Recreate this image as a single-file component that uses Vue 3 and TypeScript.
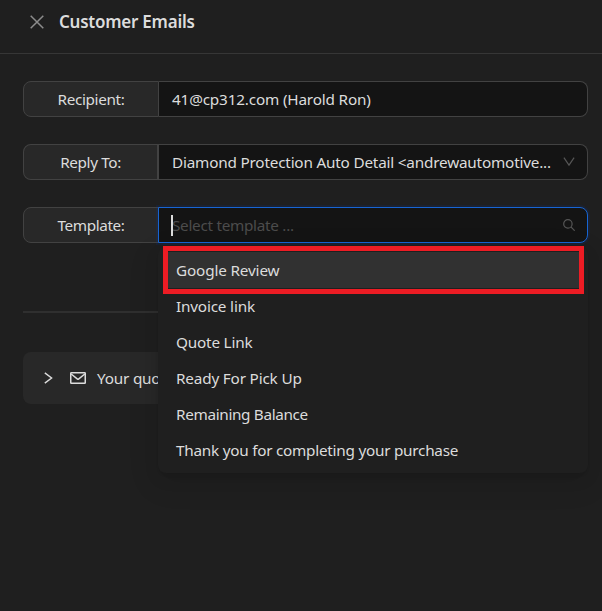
<script setup lang="ts">
import { ref } from 'vue'

interface Template {
  label: string
  fit: string
}

const templates: Template[] = [
  { label: 'Google Review', fit: 'fit-a' },
  { label: 'Invoice link', fit: 'fit-b' },
  { label: 'Quote Link', fit: 'fit-c' },
  { label: 'Ready For Pick Up', fit: 'fit-d' },
  { label: 'Remaining Balance', fit: 'fit-e' },
  { label: 'Thank you for completing your purchase', fit: 'fit-f' },
]
const active = ref<number>(0)
</script>

<template>
  <div class="drawer">
    <header class="header">
      <svg class="close" viewBox="0 0 14 14"><path d="M.7.7 13.3 13.3M13.3.7.7 13.3" /></svg>
      <h1><span class="t-title">Customer Emails</span></h1>
    </header>

    <main class="body">
      <div class="field">
        <div class="addon"><span class="t-recipient">Recipient:</span></div>
        <div class="control"><span class="t-email">41@cp312.com (Harold Ron)</span></div>
      </div>

      <div class="field">
        <div class="addon double"><span class="t-reply">Reply To:</span></div>
        <div class="control">
          <span class="t-sender">Diamond Protection Auto Detail &lt;andrewautomotive...</span>
          <svg class="suffix" viewBox="0 0 12 12"><path d="M.9 1.6 6 9.2l5.1-7.6" /></svg>
        </div>
      </div>

      <div class="field">
        <div class="addon"><span class="t-template">Template:</span></div>
        <div class="control focused">
          <i class="caret"></i>
          <span class="placeholder t-select">Select template ...</span>
          <svg class="suffix" viewBox="0 0 12 12"><circle cx="4.9" cy="4.9" r="4.2" /><path d="m7.9 7.9 3.8 3.8" /></svg>
        </div>
        <ul class="dropdown">
          <li
            v-for="(item, i) in templates"
            :key="item.label"
            :class="{ active: i === active }"
            @mouseenter="active = i"
          ><span :class="item.fit">{{ item.label }}</span></li>
        </ul>
        <div class="marker"></div>
      </div>

      <hr class="divider" />

      <section class="panel">
        <svg class="chevron" viewBox="0 0 9 12"><path d="m.8.9 6.8 5.1-6.8 5.1" /></svg>
        <svg class="mail" viewBox="0 0 16 12">
          <rect x=".75" y=".75" width="14.5" height="10.5" rx=".6" />
          <path d="m1.2 2 6.3 5.1q.5.4 1 0L14.8 2" />
        </svg>
        <span class="t-quote">Your quote</span>
      </section>
    </main>
  </div>
</template>

<style>
body {
  background: #1f1f1f;
}
</style>

<style scoped>
.drawer {
  box-sizing: border-box;
  width: 602px;
  height: 611px;
  overflow: hidden;
  background: #1f1f1f;
  color: #dcdcdc;
  font: 15.3px/24px "Noto Sans", "Open Sans", sans-serif;
  letter-spacing: -0.2px;
  white-space: nowrap;
}
.t-title { letter-spacing: -0.24px; }
.t-recipient { letter-spacing: -0.34px; }
.t-email { letter-spacing: -0.18px; }
.t-reply { letter-spacing: -0.37px; }
.t-sender { letter-spacing: -0.2px; }
.t-template { letter-spacing: -0.4px; }
.t-select { letter-spacing: -0.29px; }
.fit-a { letter-spacing: -0.16px; }
.fit-b { letter-spacing: -0.18px; }
.fit-d { letter-spacing: -0.18px; }
.fit-e { letter-spacing: -0.34px; }
.fit-f { letter-spacing: -0.25px; }
svg {
  display: block;
  flex: none;
  fill: none;
  stroke: currentColor;
}
.header {
  box-sizing: border-box;
  display: flex;
  align-items: center;
  height: 54px;
  padding: 0 30px 10px;
  border-bottom: 1px solid #363636;
}
.close {
  width: 14px;
  height: 14px;
  color: #8c8c8c;
  stroke-width: 1.5;
}
h1 {
  margin: 0 0 0 15px;
  font-size: 17px;
  line-height: 26px;
  font-weight: 600;
}
.body {
  padding: 27px 14px 0 23px;
}
.field {
  position: relative;
  display: flex;
  height: 36px;
  margin-bottom: 27px;
}
.addon,
.control {
  box-sizing: border-box;
  display: flex;
  align-items: center;
  border: 1px solid #424242;
}
.addon {
  justify-content: center;
  width: 136px;
  background: #282828;
  border-radius: 8px 0 0 8px;
}
.addon.double {
  border-right-width: 2px;
}
.control {
  position: relative;
  flex: 1;
  padding-left: 13px;
  background: #141414;
  border-left: 0;
  border-radius: 0 8px 8px 0;
}
.control.focused {
  margin-left: -1px;
  border: 1px solid #1765d3;
  box-shadow: 0 0 0 2px rgba(0, 60, 180, 0.12);
}
.suffix {
  width: 12px;
  height: 12px;
  margin: 0 12px 0 auto;
  color: #565656;
  stroke-width: 1.2;
}
.caret {
  position: absolute;
  left: 12px;
  top: 7px;
  width: 2px;
  height: 21px;
  background: #dcdcdc;
}
.placeholder {
  color: #4c4c4c;
}
.dropdown {
  position: absolute;
  z-index: 1;
  left: 135px;
  right: 0;
  top: 40px;
  margin: 0;
  padding: 5px;
  list-style: none;
  background: #1f1f1f;
  border-radius: 8px;
  box-shadow: 0 6px 16px rgba(0, 0, 0, 0.08), 0 3px 6px -4px rgba(0, 0, 0, 0.12),
    0 9px 28px 8px rgba(0, 0, 0, 0.05);
}
.dropdown li {
  height: 24px;
  padding: 6px 13px;
  border-radius: 4px;
}
.dropdown li.active {
  background: #313131;
}
.marker {
  position: absolute;
  z-index: 2;
  left: 140px;
  top: 39px;
  box-sizing: border-box;
  width: 421px;
  height: 48px;
  border: 5px solid #ed1c24;
  pointer-events: none;
}
.divider {
  height: 2px;
  margin: 68px 0 39px;
  border: 0;
  background: #2f2f2f;
}
.panel {
  display: flex;
  align-items: center;
  height: 52px;
  padding-left: 21px;
  background: #282828;
  border-radius: 8px;
}
.chevron {
  width: 9px;
  height: 12px;
  margin-right: 17px;
  stroke-width: 1.4;
}
.mail {
  width: 16px;
  height: 12px;
  margin-right: 11px;
  stroke-width: 1.5;
}
</style>
